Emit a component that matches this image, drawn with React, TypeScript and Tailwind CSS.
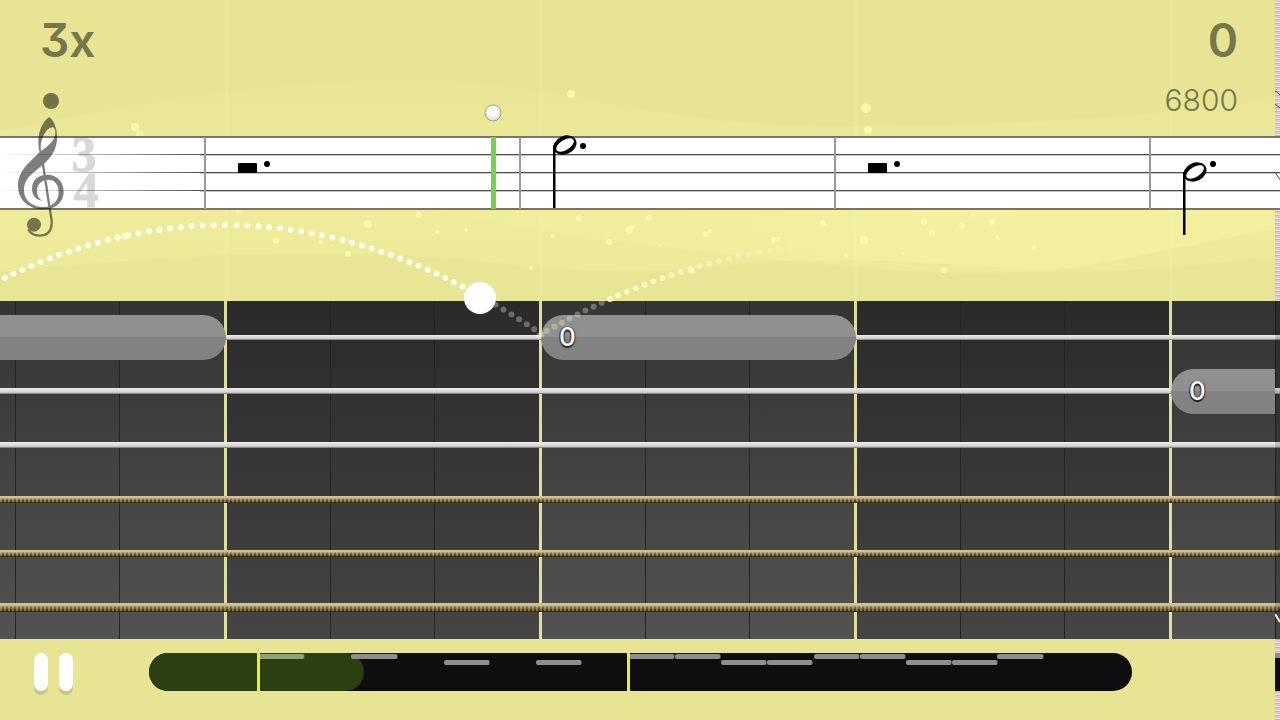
import { clsx } from 'clsx';

type Dot = { x: number; y: number; r: number; o?: number };

// ---- Song data ----

const measures = [0, 1, 2, 3, 4, 5, 6, 7];

const strings = [
    { id: 'e', wound: false, size: 'h-[5px]', notes: [true, false, true] },
    { id: 'B', wound: false, size: 'h-[6px]', notes: [false, false, false, false, true] },
    { id: 'G', wound: false, size: 'h-[6px]', notes: [] },
    { id: 'D', wound: true, size: 'h-[7px]', notes: [] },
    { id: 'A', wound: true, size: 'h-[7px]', notes: [] },
    { id: 'E', wound: true, size: 'h-[9px]', notes: [] },
];

// Start of each note on the song overview, in percent of the song
const overview = [
    { at: 11.2, low: false },
    { at: 20.6, low: false },
    { at: 30, low: true },
    { at: 39.4, low: true },
    { at: 48.8, low: false },
    { at: 53.5, low: false },
    { at: 58.2, low: true },
    { at: 62.9, low: true },
    { at: 67.6, low: false },
    { at: 72.3, low: false },
    { at: 77, low: true },
    { at: 81.7, low: true },
    { at: 86.3, low: false },
];

const loopMarks = [11, 48.6];

// ---- Sparkles, measured from the top of the page ----

const sparkles: Dot[] = [
    { x: 135, y: 127, r: 4 },
    { x: 140, y: 134, r: 4, o: 0.6 },
    { x: 571, y: 94, r: 4 },
    { x: 866, y: 108, r: 5 },
    { x: 868, y: 130, r: 4 },
    { x: 125, y: 236, r: 4 },
    { x: 238, y: 211, r: 3, o: 0.6 },
    { x: 276, y: 241, r: 3 },
    { x: 321, y: 242, r: 2 },
    { x: 348, y: 254, r: 3 },
    { x: 368, y: 224, r: 4 },
    { x: 419, y: 215, r: 3 },
    { x: 437, y: 232, r: 2 },
    { x: 466, y: 230, r: 2 },
    { x: 531, y: 268, r: 2 },
    { x: 553, y: 236, r: 2 },
    { x: 579, y: 218, r: 3 },
    { x: 609, y: 242, r: 3 },
    { x: 629, y: 230, r: 4 },
    { x: 633, y: 227, r: 2 },
    { x: 649, y: 218, r: 3 },
    { x: 660, y: 246, r: 1 },
    { x: 692, y: 271, r: 3 },
    { x: 706, y: 234, r: 3 },
    { x: 710, y: 231, r: 2 },
    { x: 774, y: 240, r: 3 },
    { x: 779, y: 239, r: 2 },
    { x: 823, y: 223, r: 3 },
    { x: 846, y: 255, r: 2 },
    { x: 864, y: 240, r: 4 },
    { x: 903, y: 254, r: 2, o: 0.5 },
    { x: 924, y: 222, r: 3 },
    { x: 932, y: 233, r: 3 },
    { x: 944, y: 270, r: 3 },
    { x: 962, y: 226, r: 3 },
    { x: 973, y: 215, r: 2, o: 0.5 },
    { x: 992, y: 222, r: 3 },
    { x: 997, y: 237, r: 2 },
    { x: 1034, y: 247, r: 2 },
];

// Dots get closer together as they move away from the top of the jump
const step = (n: number) => 11.3 * n - Math.sign(n) * 0.0585 * n * n;

const currentJump: Dot[] = [];
for (let n = -23; n <= 34; n++) {
    const dx = step(n);
    const x = 225 + dx;
    currentJump.push({ x, y: 15 + 0.00109 * dx * dx, r: 3, o: x > 485 ? 0.3 : 0.95 });
}

const nextJump: Dot[] = [];
for (let n = -34; n <= -5; n++) {
    const dx = step(n);
    const x = 856 + dx;
    const fade = x < 606 ? 0.3 : Math.max(0, 0.95 - (x - 606) / 220);
    nextJump.push({ x, y: 34 + 0.00091 * dx * dx, r: 3, o: fade });
}

// ---- Drawings ----

function Backdrop() {
    return (
        <svg className="absolute inset-0 w-full h-full pointer-events-none" aria-hidden="true">
            <defs>
                <linearGradient id="glow" x1="0" y1="0" x2="0" y2="1">
                    <stop offset="0" stopColor="#f6f4a2" stopOpacity="0.05" />
                    <stop offset="0.6" stopColor="#f6f4a2" stopOpacity="0.5" />
                    <stop offset="1" stopColor="#f6f4a2" stopOpacity="0.3" />
                </linearGradient>
                <linearGradient id="shine" x1="0" y1="0" x2="1" y2="0">
                    <stop offset="0" stopColor="#f8f6a4" stopOpacity="0" />
                    <stop offset="0.6" stopColor="#f8f6a4" stopOpacity="0.5" />
                    <stop offset="1" stopColor="#f8f6a4" stopOpacity="0.4" />
                </linearGradient>
            </defs>
            <path d="M0 132C140 100 260 82 400 80C560 78 660 130 850 126C1000 126 1160 118 1280 96V300H0Z" fill="url(#glow)" />
            <path d="M400 205H1280V228C1180 246 1100 266 1050 270C940 280 800 262 640 244C560 234 480 220 400 205Z" fill="url(#shine)" />
            <path d="M0 272C160 256 320 246 470 260C560 270 640 276 720 266C860 252 980 268 1080 272C1160 270 1220 262 1280 256V300H0Z" fill="#dcd98c" fillOpacity="0.2" />
            {[227, 541, 856, 1172].map((x) => (
                <rect key={x} x={x - 2} width="3" height="300" fill="#f7f5b4" fillOpacity="0.2" />
            ))}
            {sparkles.map((s, i) => (
                <circle key={i} cx={s.x} cy={s.y} r={s.r} fill="#fcfab2" fillOpacity={s.o ?? 0.85} />
            ))}
        </svg>
    );
}

function TrebleClef() {
    return (
        <svg x="0" y="-56" width="110" height="180" viewBox="0 0 330 540">
            <g opacity="0.5">
                <circle cx="153" cy="63" r="24" />
                <path
                    fillRule="evenodd"
                    d="M147 111C163 121 173 150 171 178C169 208 156 229 134 250C106 276 72 292 72 330C72 363 99 381 130 381C161 381 176 360 176 336C176 312 162 299 146 299C126 299 111 312 111 332C111 346 116 356 127 362C108 361 96 347 96 325C96 301 115 284 141 284C171 284 191 305 191 335C191 367 166 388 130 388C86 388 54 359 54 317C54 274 88 247 119 217C112 186 112 140 147 111ZM157 142C140 142 119 176 123 213C148 195 166 180 166 158C166 148 163 142 157 142Z"
                />
                <path d="M128 246L149 385C153 410 156 420 155 432C153 458 136 467 118 467C103 467 91 460 85 448" fill="none" stroke="#000" strokeWidth="7" />
                <circle cx="102" cy="434" r="21" />
            </g>
        </svg>
    );
}

function DottedHalfNote({ x, y, stem, dotY }: { x: number; y: number; stem: number; dotY: number }) {
    return (
        <g>
            <ellipse cx={x} cy={y} rx="12" ry="9" transform={`rotate(-25 ${x} ${y})`} />
            <ellipse cx={x} cy={y} rx="10" ry="5" fill="#fff" transform={`rotate(-32 ${x} ${y})`} />
            <rect x={x - 12} y={y} width="2.5" height={stem} />
            <circle cx={x + 18} cy={dotY} r="3" />
        </g>
    );
}

function DottedRest({ x }: { x: number }) {
    return (
        <g>
            <rect x={x} y="27" width="19" height="10" rx="1" />
            <circle cx={x + 29} cy="28" r="3" />
        </g>
    );
}

function Staff() {
    return (
        <section aria-label="Sheet music" className="relative z-10 bg-white">
            <svg className="block w-full h-[74px] overflow-visible">
                <defs>
                    <linearGradient id="fadeIn" gradientUnits="userSpaceOnUse" x1="0" y1="0" x2="200" y2="0">
                        <stop offset="0" stopColor="#555" stopOpacity="0" />
                        <stop offset="1" stopColor="#555" stopOpacity="1" />
                    </linearGradient>
                    <radialGradient id="ball" cx="0.45" cy="0.35" r="0.65">
                        <stop offset="0.4" stopColor="#fff" />
                        <stop offset="1" stopColor="#d9d9d9" />
                    </radialGradient>
                </defs>
                <rect y="0" width="100%" height="2" fill="#77756a" />
                <rect y="72" width="100%" height="2" fill="#77756a" />
                {[18, 36, 54].map((y) => (
                    <g key={y}>
                        <rect y={y} width="200" height="1" fill="url(#fadeIn)" />
                        <rect x="200" y={y} width="100%" height="1" fill="#505050" />
                        <rect x="200" y={y + 1} width="100%" height="1" fill="#c4c4c4" />
                    </g>
                ))}
                {[204, 519, 834, 1149].map((x) => (
                    <rect key={x} x={x} y="1" width="2" height="72" fill="#999" />
                ))}
                <TrebleClef />
                <g opacity="0.15" stroke="#000" fontFamily="Liberation Serif, serif" fontWeight="700" fontSize="50" textAnchor="middle">
                    <text x="84" y="35">3</text>
                    <text x="86" y="71">4</text>
                </g>
                <DottedRest x={238} />
                <DottedHalfNote x={565} y={9} stem={63} dotY={10} />
                <DottedRest x={868} />
                <DottedHalfNote x={1195} y={36} stem={63} dotY={28} />
                <rect x="491" y="1" width="5" height="72" fill="#77d150" />
                <circle cx="493" cy="-23" r="8" fill="url(#ball)" stroke="#a5a391" />
            </svg>
        </section>
    );
}

function JumpPath() {
    return (
        <section aria-hidden="true" className="relative z-20 pointer-events-none">
            <svg className="block w-full h-[91px] overflow-visible">
                {currentJump.map((d, i) => (
                    <circle key={i} cx={d.x} cy={d.y} r={d.r} fill="#fffff2" fillOpacity={d.o} />
                ))}
                {nextJump.map((d, i) => (
                    <circle key={i} cx={d.x} cy={d.y} r={d.r} fill="#fefec8" fillOpacity={d.o} />
                ))}
                <circle cx="480" cy="88" r="16" fill="#fff" />
            </svg>
        </section>
    );
}

// ---- Fretboard ----

function Measure({ light }: { light: boolean }) {
    return (
        <div
            className={clsx(
                'grid grid-cols-3 shrink-0 w-[315px] border-r-3 border-[#e0de9c] bg-linear-to-b',
                light ? 'from-[#343434] to-[#525252]' : 'from-[#2a2a2a] to-[#454545]'
            )}
        >
            <div className="border-r border-[#242424]"></div>
            <div className="border-r border-[#242424]"></div>
            <div></div>
        </div>
    );
}

function NotePill({ fret, last }: { fret?: string; last?: boolean }) {
    return (
        <div
            className={clsx(
                'flex items-center h-[45px] px-[18px] bg-linear-to-b from-[#909090] from-50% to-[#828282] to-50%',
                last ? 'grow mr-[5px] rounded-l-full' : 'shrink-0 w-[315px] rounded-full'
            )}
        >
            <span className="font-medium text-[26px] leading-8 text-white [text-shadow:0_2px_1px_#222,1px_0_1px_#333,-1px_0_1px_#333]">
                {fret}
            </span>
        </div>
    );
}

function StringRow({ string }: { string: (typeof strings)[number] }) {
    return (
        <div className="grid grid-cols-1 items-center h-[54px]">
            <div
                className={clsx(
                    'col-start-1 row-start-1',
                    string.size,
                    string.wound
                        ? 'bg-[linear-gradient(#cfc09a_0_25%,#a8986899_45%,#3a300e80_85%,#1c1808),repeating-linear-gradient(90deg,#b8a874_0_2px,#4a3f1a_2px_4px)]'
                        : 'bg-[linear-gradient(#ececec,#dcdada_50%,#c4c2c2_80%,#5c5c5c)]'
                )}
            ></div>
            <div className="col-start-1 row-start-1 flex -ml-[89px]">
                {string.notes.map((played, i) =>
                    played ? (
                        <NotePill key={i} fret={i === 0 ? undefined : '0'} last={i === 4} />
                    ) : (
                        <div key={i} className="shrink-0 w-[315px]"></div>
                    )
                )}
            </div>
        </div>
    );
}

function Fretboard() {
    return (
        <section aria-label="Fretboard" className="relative z-10 grid grid-cols-1 overflow-hidden">
            <div className="col-start-1 row-start-1 flex min-w-0 -ml-[88px]">
                {measures.map((m) => (
                    <Measure key={m} light={m % 2 === 0} />
                ))}
            </div>
            <div className="col-start-1 row-start-1 min-w-0 pt-[9px] pb-[5px]">
                {strings.map((s) => (
                    <StringRow key={s.id} string={s} />
                ))}
            </div>
            <div className="absolute top-0 right-0 w-[5px] h-full bg-black/15"></div>
        </section>
    );
}

// ---- Footer ----

function SongOverview() {
    return (
        <div role="progressbar" aria-label="Song position" aria-valuenow={22} className="relative grow h-[38px] rounded-full overflow-hidden bg-[#0e0e10]">
            <div className="h-full w-[21.9%] rounded-r-full bg-[#2b3f10]"></div>
            {overview.map((n, i) => (
                <span
                    key={n.at}
                    className={clsx(
                        'absolute w-[4.7%] h-[5px] rounded-xs border-r border-[#444]',
                        n.low ? 'top-[7px]' : 'top-px',
                        i === 0 ? 'bg-[#8fa276]' : 'bg-[#8e8e8e]'
                    )}
                    style={{ left: `${n.at}%` }}
                ></span>
            ))}
            {loopMarks.map((at) => (
                <span key={at} className="absolute top-0 h-full w-[3px] bg-[#f0ec30]" style={{ left: `${at}%` }}></span>
            ))}
        </div>
    );
}

export default function App() {
    return (
        <main className="relative min-h-screen overflow-hidden bg-[#e7e493] font-['Inter',sans-serif]">
            <Backdrop />
            <div className="absolute top-0 right-0 w-[5px] h-full bg-[repeating-linear-gradient(#e9c6d6_0_1px,#c2cdea_1px_2px,#e6e4dc_2px_3px,#b9b6d2_3px_4px)]"></div>

            <header className="relative flex justify-between pl-10 pr-[42px] pt-4 pb-5 text-[#77764c]">
                <p className="text-[46px] leading-12 font-semibold [font-feature-settings:'cv09']">3x</p>
                <div className="flex flex-col gap-5 text-right">
                    <p className="text-[46px] leading-12 font-semibold">0</p>
                    <p className="text-[30px] leading-8 font-light">6800</p>
                </div>
            </header>

            <Staff />
            <JumpPath />
            <Fretboard />

            <footer className="relative flex items-start pt-[14px] pb-[29px] pl-[34px] pr-[148px]">
                <button type="button" aria-label="Pause" className="flex gap-[11px] w-[115px] h-[38px] shrink-0">
                    <span className="w-[14px] h-full rounded-full bg-white shadow-[0_4px_0_#c9c68a]"></span>
                    <span className="w-[14px] h-full rounded-full bg-white shadow-[0_4px_0_#c9c68a]"></span>
                </button>
                <SongOverview />
                <div className="absolute top-[14px] right-0 w-[5px] h-[38px] bg-[#0e0e10] border-t-5 border-[#8e8e8e]"></div>
            </footer>

            {/* Torn lines along the right edge */}
            <svg className="absolute top-0 right-0 z-20 w-[5px] h-full pointer-events-none" fill="none" aria-hidden="true">
                <path d="M0 91Q3 92 5 95M0 104L5 108M0 172L5 180" stroke="#444a55" />
                <path d="M0 614L5 622" stroke="#eee" strokeWidth="2" />
            </svg>
        </main>
    );
}
